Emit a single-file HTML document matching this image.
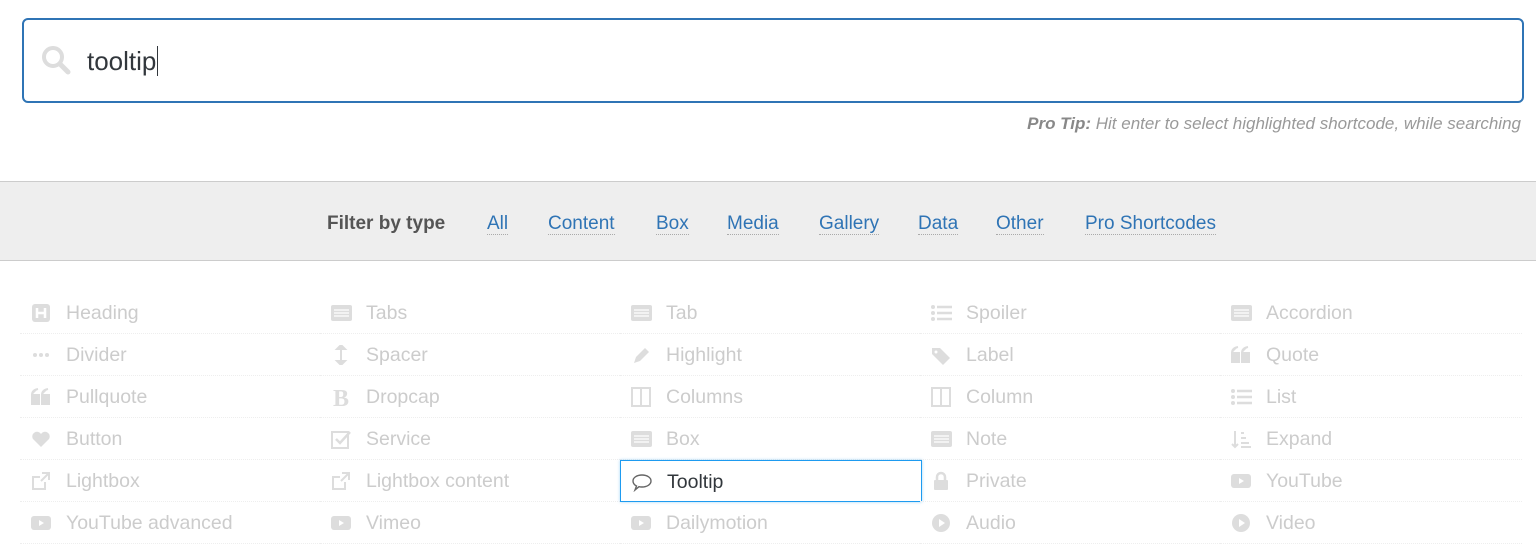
<!DOCTYPE html>
<html><head><meta charset="utf-8"><style>
*{box-sizing:border-box;margin:0;padding:0}
body{width:1536px;height:552px;background:#fff;font-family:"Liberation Sans",sans-serif;position:relative;overflow:hidden}
.search{position:absolute;left:22px;top:18px;width:1502px;height:85px;border:2px solid #2f74b5;border-radius:6px}
.search .t{position:absolute;left:63px;top:26px;font-size:26px;color:#32373c}
.search .caret{display:inline-block;width:1px;height:30px;background:#32373c;vertical-align:-6px;margin-left:1px}
.tip{position:absolute;right:15px;top:114px;font-size:17px;font-style:italic;color:#999}
.tip b{color:#888}
.filter{position:absolute;left:0;top:181px;width:1536px;height:80px;background:#eee;border-top:1px solid #ccc;border-bottom:1px solid #ccc}
.filter span{position:absolute;top:31px;font-size:19px}
.filter .l{font-weight:bold;color:#555;left:327px}
.filter a{color:#2f74b5;text-decoration:none;border-bottom:1px dotted #aaa;line-height:22px}
.it{position:absolute;width:302px;height:42px;font-size:19.5px;color:#ccc;border-bottom:1px dotted #eee}
.it svg{position:absolute;left:11px;top:11px}
.it span{position:absolute;left:46px;top:10px}
.sel{border:1px solid #1e9bf0;color:#32373c;box-shadow:0 0 3px rgba(30,155,240,.4)}
</style></head><body>
<div class="search">
<svg style="position:absolute;left:16px;top:24px" width="32" height="32" viewBox="0 0 32 32"><circle cx="13" cy="13" r="9" fill="none" stroke="#ddd" stroke-width="4"/><line x1="20" y1="20" x2="28" y2="28" stroke="#ddd" stroke-width="5" stroke-linecap="round"/></svg>
<div class="t">tooltip<span class="caret"></span></div>
</div>
<div class="tip"><b>Pro Tip:</b> Hit enter to select highlighted shortcode, while searching</div>
<div class="filter">
<span class="l">Filter by type</span>
<span style="left:487px"><a>All</a></span>
<span style="left:548px"><a>Content</a></span>
<span style="left:656px"><a>Box</a></span>
<span style="left:727px"><a>Media</a></span>
<span style="left:819px"><a>Gallery</a></span>
<span style="left:918px"><a>Data</a></span>
<span style="left:996px"><a>Other</a></span>
<span style="left:1085px"><a>Pro Shortcodes</a></span>
</div>
<div id="g"></div>
<script>
const I={
H:'<rect x="1" y="1" width="18" height="18" rx="3" fill="#ddd"/><path d="M6 5v10M14 5v10M6 10h8" stroke="#fff" stroke-width="2.5"/>',
T:'<rect x="0" y="2" width="21" height="16" rx="2" fill="#ddd"/><path d="M3 7h15M3 10h15M3 13h15" stroke="#fff" stroke-width="1.3"/>',
L:'<circle cx="2" cy="4" r="2" fill="#ddd"/><circle cx="2" cy="10" r="2" fill="#ddd"/><circle cx="2" cy="16" r="2" fill="#ddd"/><path d="M6 4h15M6 10h15M6 16h15" stroke="#ddd" stroke-width="2.5"/>',
D:'<circle cx="4" cy="10" r="2" fill="#ddd"/><circle cx="10" cy="10" r="2" fill="#ddd"/><circle cx="16" cy="10" r="2" fill="#ddd"/>',
S:'<path d="M10 0l-4 4h8zM10 20l-4-4h8zM10 3v14" stroke="#ddd" stroke-width="2" fill="#ddd"/>',
P:'<path d="M3 18l2-6 9-9 4 4-9 9z" fill="#ddd"/>',
G:'<path d="M1 3h8l10 10-7 7-11-11z" fill="#ddd"/><circle cx="5" cy="7" r="1.5" fill="#fff"/>',
Q:'<path d="M1 8h7v9H1zM11 8h7v9h-7zM1 8q0-5 6-6M11 8q0-5 6-6" fill="#ddd" stroke="#ddd" stroke-width="2"/>',
B:'<text x="2" y="19" font-family="Liberation Serif" font-weight="bold" font-size="24" fill="#ddd">B</text>',
C:'<rect x="1" y="1" width="18" height="18" fill="none" stroke="#ddd" stroke-width="2"/><path d="M10 1v18" stroke="#ddd" stroke-width="2"/>',
HE:'<path d="M10 18l-8-8a4.5 4.5 0 0 1 8-5a4.5 4.5 0 0 1 8 5z" fill="#ddd"/>',
SV:'<rect x="1" y="3" width="16" height="16" fill="none" stroke="#ddd" stroke-width="2"/><path d="M5 10l4 4 10-11" stroke="#ddd" stroke-width="2.5" fill="none"/>',
E:'<path d="M4 2v16M1 15l3 3 3-3M10 4h3M10 9h5M10 14h8M10 18h10" stroke="#ddd" stroke-width="2" fill="none"/>',
LB:'<path d="M14 11v7H2V6h7M11 2h7v7M18 2l-8 8" stroke="#ddd" stroke-width="2" fill="none"/>',
LK:'<rect x="3" y="9" width="14" height="10" rx="1" fill="#ddd"/><path d="M6 9V6a4 4 0 0 1 8 0v3" stroke="#ddd" stroke-width="2.5" fill="none"/>',
Y:'<rect x="0" y="3" width="20" height="14" rx="3" fill="#ddd"/><path d="M8 7l5 3-5 3z" fill="#fff"/>',
A:'<circle cx="10" cy="10" r="9" fill="#ddd"/><path d="M8 6l6 4-6 4z" fill="#fff"/>',
TT:'<path d="M10 3c5 0 9 2.5 9 6s-4 6-9 6c-1 0-2 0-3-.3L3 18l1.5-4C2.5 13 1 11 1 9c0-3.5 4-6 9-6z" fill="none" stroke="#666" stroke-width="1.4"/>'
};
const rows=[
[['H','Heading'],['T','Tabs'],['T','Tab'],['L','Spoiler'],['T','Accordion']],
[['D','Divider'],['S','Spacer'],['P','Highlight'],['G','Label'],['Q','Quote']],
[['Q','Pullquote'],['B','Dropcap'],['C','Columns'],['C','Column'],['L','List']],
[['HE','Button'],['SV','Service'],['T','Box'],['T','Note'],['E','Expand']],
[['LB','Lightbox'],['LB','Lightbox content'],['TT','Tooltip'],['LK','Private'],['Y','YouTube']],
[['Y','YouTube advanced'],['Y','Vimeo'],['Y','Dailymotion'],['A','Audio'],['A','Video']]];
let h='';
rows.forEach((r,ri)=>r.forEach((c,ci)=>{
 const sel=ri==4&&ci==2;
 h+=`<div class="it${sel?' sel':''}" style="left:${20+ci*300}px;top:${292+ri*42}px"><svg width="22" height="20" viewBox="0 0 22 20">${I[c[0]]}</svg><span>${c[1]}</span></div>`;
}));
document.getElementById('g').innerHTML=h;
</script>
</body></html>
